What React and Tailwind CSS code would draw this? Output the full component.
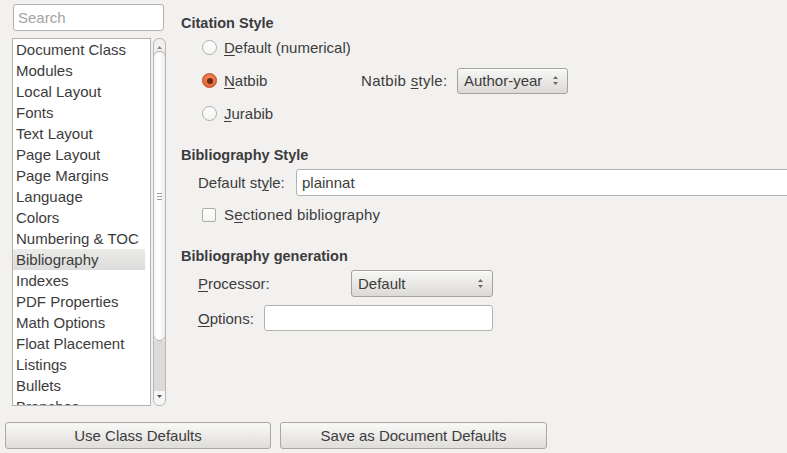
import React from 'react'

const items = [
  'Document Class', 'Modules', 'Local Layout', 'Fonts', 'Text Layout', 'Page Layout',
  'Page Margins', 'Language', 'Colors', 'Numbering & TOC', 'Bibliography', 'Indexes',
  'PDF Properties', 'Math Options', 'Float Placement', 'Listings', 'Bullets', 'Branches',
]

function U({ children }) {
  return <span className="underline underline-offset-[2px] decoration-[1px]">{children}</span>
}

function Heading({ children, className = '' }) {
  return <div className={`h-[17px] pt-[1px] leading-[17px] font-bold text-[14.5px] ${className}`}>{children}</div>
}

function Radio({ checked }) {
  if (checked) {
    return (
      <span className="w-[15px] h-[15px] rounded-full border border-[#b9481f] bg-[radial-gradient(circle_at_50%_35%,#f58a5f,#e2572a)] flex items-center justify-center shrink-0">
        <span className="w-[6px] h-[6px] rounded-full bg-[#6b2a14]" />
      </span>
    )
  }
  return <span className="w-[15px] h-[15px] rounded-full border border-[#aeaca9] bg-[linear-gradient(#ffffff,#f4f4f3)] shrink-0" />
}

function Arrows() {
  return (
    <svg width="7" height="11" viewBox="0 0 7 11" className="shrink-0">
      <path d="M3.5 1 L6 4 L1 4 Z" fill="#6a6a6a" />
      <path d="M3.5 10 L6 7 L1 7 Z" fill="#6a6a6a" />
    </svg>
  )
}

function Select({ value, className }) {
  return (
    <div className={`flex items-center justify-between pl-[6px] pr-[8px] border border-[#a5a3a0] rounded-[3px] bg-[linear-gradient(#f7f7f6,#dcdad7)] shadow-[inset_0_1px_0_#ffffff] ${className}`}>
      <span>{value}</span>
      <Arrows />
    </div>
  )
}

function Button({ children, className }) {
  return (
    <div className={`h-[27px] flex items-center justify-center border border-[#aaa8a5] rounded-[3px] bg-[linear-gradient(#f9f9f8,#dfddda)] ${className}`}>
      {children}
    </div>
  )
}

function ScrollBar() {
  return (
    <div className="w-[13px] h-[368px] flex flex-col border border-[#b9b7b4] rounded-[6px] bg-[#f0efee] overflow-hidden">
      <div className="h-[12px] flex justify-center items-end pb-[2px]">
        <svg width="5" height="3" viewBox="0 0 5 3"><path d="M2.5 0 L5 3 L0 3 Z" fill="#8a8a8a" /></svg>
      </div>
      <div className="h-[290px] mx-[-1px] border border-[#b3b1ae] rounded-[6px] bg-[linear-gradient(90deg,#f6f6f6,#ffffff,#ececec)] flex flex-col items-center justify-center gap-[2px]">
        <span className="w-[5px] h-[1px] bg-[#a0a0a0]" />
        <span className="w-[5px] h-[1px] bg-[#a0a0a0]" />
        <span className="w-[5px] h-[1px] bg-[#a0a0a0]" />
      </div>
      <div className="flex-1 bg-[#dcdbda]" />
      <div className="h-[14px] flex justify-center items-start pt-[4px] bg-[#f6f6f6] rounded-b-[6px]">
        <svg width="5" height="3" viewBox="0 0 5 3"><path d="M2.5 3 L5 0 L0 0 Z" fill="#555" /></svg>
      </div>
    </div>
  )
}

export default function App() {
  return (
    <div className="w-[787px] h-[453px] overflow-hidden bg-[#f2f1f0] text-[#3c3c3c] text-[15px] leading-[17px] flex flex-col font-['Liberation_Sans',Arial,sans-serif]">
      <div className="h-[422px] flex">
        {/* left: search + section list */}
        <div className="w-[166px] pl-[12px] pt-[4px] flex flex-col shrink-0">
          <div className="ml-[1px] w-[151px] h-[27px] border border-[#b4b2af] rounded-[3px] bg-white flex items-center pl-[4px] text-[#a3a3a3]">
            Search
          </div>
          <div className="mt-[7px] flex gap-[2px]">
            <div className="w-[139px] h-[368px] border border-[#b4b2af] bg-white overflow-hidden">
              {items.map((it) => (
                <div
                  key={it}
                  className={`h-[21px] flex items-center pl-[3px] mr-[5px] whitespace-nowrap ${it === 'Bibliography' ? 'bg-[linear-gradient(#ebebea,#dddcdb)]' : ''}`}
                >
                  {it}
                </div>
              ))}
            </div>
            <ScrollBar />
          </div>
        </div>

        {/* right: bibliography settings */}
        <div className="flex-1 pl-[15px] pt-[14px] flex flex-col overflow-hidden">
          <Heading>Citation Style</Heading>
          <div className="pl-[21px] flex flex-col">
            <div className="h-[33px] flex items-center">
              <Radio />
              <span className="ml-[7px]"><U>D</U>efault (numerical)</span>
            </div>
            <div className="h-[33px] flex items-center">
              <div className="w-[159px] flex items-center">
                <Radio checked />
                <span className="ml-[7px]"><U>N</U>atbib</span>
              </div>
              <span className="w-[96px] tracking-[0.3px]">Natbib <U>s</U>tyle:</span>
              <Select value="Author-year" className="w-[111px] h-[26px]" />
            </div>
            <div className="h-[33px] flex items-center">
              <Radio />
              <span className="ml-[7px]"><U>J</U>urabib</span>
            </div>
          </div>

          <Heading className="mt-[16px]">Bibliography Style</Heading>
          <div className="mt-[6px] pl-[17px] h-[27px] flex items-center">
            <span className="w-[98px] shrink-0">Default st<U>y</U>le:</span>
            <div className="w-[520px] h-[27px] shrink-0 border border-[#b4b2af] rounded-[3px] bg-white flex items-center pl-[5px]">
              plainnat
            </div>
          </div>
          <div className="mt-[7px] pl-[21px] h-[23px] flex items-center">
            <span className="w-[14px] h-[14px] border border-[#aeaca9] rounded-[2px] bg-[linear-gradient(#ffffff,#f3f3f2)] shrink-0" />
            <span className="ml-[8px] tracking-[0.2px]">S<U>e</U>ctioned bibliography</span>
          </div>

          <Heading className="mt-[21px]">Bibliography generation</Heading>
          <div className="mt-[6px] pl-[17px] h-[27px] flex items-center">
            <span className="w-[153px] shrink-0"><U>P</U>rocessor:</span>
            <Select value="Default" className="w-[142px] h-[27px]" />
          </div>
          <div className="mt-[8px] pl-[17px] h-[26px] flex items-center">
            <span className="w-[66px] shrink-0"><U>O</U>ptions:</span>
            <div className="w-[229px] h-[26px] border border-[#b4b2af] rounded-[3px] bg-white" />
          </div>
        </div>
      </div>

      <div className="flex pl-[5px] gap-[9px]">
        <Button className="w-[266px]">Use Class Defaults</Button>
        <Button className="w-[267px]">Save as Document Defaults</Button>
      </div>
    </div>
  )
}
